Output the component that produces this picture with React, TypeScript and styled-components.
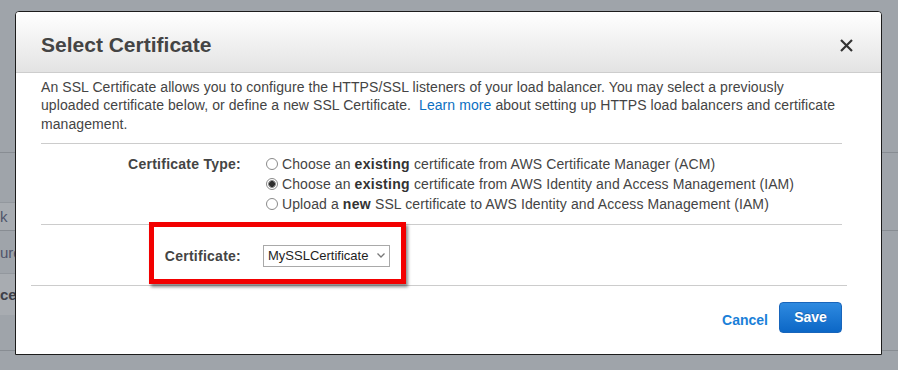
import React from "react";
import styled, { createGlobalStyle } from "styled-components";

const GlobalStyle = createGlobalStyle`
  html, body {
    margin: 0;
    padding: 0;
  }
  body {
    background: #9fa4aa;
    font-family: "Liberation Sans", Arial, sans-serif;
  }
`;

const Screen = styled.div`
  position: relative;
  width: 898px;
  height: 370px;
  overflow: hidden;
`;

/* page behind the dialog */
const BgPage = styled.div`
  display: flex;
  flex-direction: column;
`;

const BgRow = styled.div<{ $h: number; $line?: boolean }>`
  box-sizing: border-box;
  height: ${(p) => p.$h}px;
  display: flex;
  border-bottom: ${(p) => (p.$line ? "1px solid #888d93" : "none")};
`;

const BgCell = styled.div<{ $shade?: boolean; $bold?: boolean }>`
  box-sizing: border-box;
  width: 120px;
  display: flex;
  align-items: center;
  font-size: 15px;
  font-weight: ${(p) => (p.$bold ? "bold" : "normal")};
  color: ${(p) => (p.$bold ? "#3d4049" : "#4f546a")};
  background: ${(p) => (p.$shade ? "#a8acb1" : "transparent")};
  border-top: ${(p) => (p.$shade ? "1px solid #93989e" : "none")};
`;

/* dialog */
const Modal = styled.div`
  position: absolute;
  left: 15px;
  top: 11px;
  width: 867px;
  height: 344px;
  box-sizing: border-box;
  border: 1px solid #1c1c1c;
  border-radius: 4px 4px 0 0;
  background: #fff;
  display: flex;
  flex-direction: column;
`;

const Header = styled.div`
  box-sizing: border-box;
  height: 61px;
  padding: 6px 28px 0 25px;
  display: flex;
  align-items: center;
  justify-content: space-between;
  border-bottom: 1px solid #cdcdcd;
  border-radius: 3px 3px 0 0;
  background: linear-gradient(#ffffff, #e3e3e3);
`;

const Title = styled.h2`
  margin: 0;
  font-size: 21px;
  font-weight: bold;
  color: #444;
`;

const CloseButton = styled.button`
  width: 13px;
  height: 13px;
  padding: 0;
  border: none;
  background: transparent;
  display: flex;
  cursor: pointer;
`;

const Body = styled.div`
  position: relative;
  padding: 5px 39px 0 25px;
`;

const Intro = styled.p`
  margin: 0 0 10px;
  font-size: 14px;
  line-height: 18.3px;
  letter-spacing: 0.08px;
  color: #444;
`;

const Link = styled.a`
  color: #0b6fc2;
  text-decoration: none;
`;

const Section = styled.div<{ $pad: string }>`
  position: relative;
  padding: ${(p) => p.$pad};
  border-top: 1px solid #cccccc;
`;

const FormRow = styled.div<{ $align: string }>`
  display: grid;
  grid-template-columns: 200px 1fr;
  column-gap: 22px;
  align-items: ${(p) => p.$align};
`;

const Label = styled.div`
  text-align: right;
  font-size: 14px;
  line-height: 20px;
  font-weight: bold;
  letter-spacing: 0.25px;
  color: #444;
`;

const RadioList = styled.div`
  display: flex;
  flex-direction: column;
`;

const RadioOption = styled.label`
  display: flex;
  align-items: center;
  gap: 4px;
  height: 20px;
  font-size: 14px;
  letter-spacing: 0.1px;
  color: #444;
  white-space: nowrap;

  b {
    color: #333;
    letter-spacing: 0.3px;
  }
`;

const Radio = styled.input`
  appearance: none;
  margin: 1px 0 0 3px;
  width: 12px;
  height: 12px;
  box-sizing: border-box;
  border: 1px solid #8a8a8a;
  border-radius: 50%;
  background: #fff;

  &:checked {
    background: radial-gradient(circle, #2e2e2e 0 2.6px, #8f8f8f 3.1px 3.6px, #fff 4.2px);
  }
`;

const SelectWrap = styled.div`
  position: relative;
  width: 127px;
  height: 22px;
`;

const Select = styled.select`
  appearance: none;
  width: 100%;
  height: 100%;
  box-sizing: border-box;
  margin: 0;
  padding: 0 16px 0 4px;
  border: 1px solid #a9a9a9;
  border-radius: 0;
  background: #fff;
  font-family: "Liberation Sans", Arial, sans-serif;
  font-size: 13px;
  color: #1e1e1e;
`;

const Chevron = styled.svg`
  position: absolute;
  right: 5px;
  top: 8px;
  pointer-events: none;
`;

const Highlight = styled.div`
  position: absolute;
  left: 108px;
  top: -3px;
  width: 257px;
  height: 62px;
  box-sizing: border-box;
  border: 5px solid #f20000;
  box-shadow: 2px 3px 3px rgba(0, 0, 0, 0.45);
  pointer-events: none;
  z-index: 2;
`;

const Footer = styled.div`
  margin: 0 34px 0 15px;
  padding: 16px 5px 0 0;
  border-top: 1px solid #cccccc;
  display: flex;
  justify-content: flex-end;
  align-items: center;
  gap: 11px;
`;

const CancelButton = styled.button`
  padding: 6px 0 0;
  border: none;
  background: none;
  font-family: inherit;
  font-size: 14px;
  font-weight: bold;
  color: #1a80d8;
  cursor: pointer;
`;

const SaveButton = styled.button`
  width: 63px;
  height: 31px;
  box-sizing: border-box;
  border: 1px solid #1865bb;
  border-radius: 4px;
  background: linear-gradient(#2e8ae0, #0c67c6);
  font-family: inherit;
  font-size: 14px;
  font-weight: bold;
  color: #fff;
  text-shadow: 0 -1px 0 rgba(0, 0, 0, 0.2);
  cursor: pointer;
`;

const options = [
  { pre: "Choose an ", strong: "existing", post: " certificate from AWS Certificate Manager (ACM)" },
  { pre: "Choose an ", strong: "existing", post: " certificate from AWS Identity and Access Management (IAM)" },
  { pre: "Upload a ", strong: "new", post: " SSL certificate to AWS Identity and Access Management (IAM)" },
];

export default function App() {
  const [choice, setChoice] = React.useState(1);

  return (
    <Screen>
      <GlobalStyle />
      <BgPage>
        <BgRow $h={153} $line />
        <BgRow $h={49} />
        <BgRow $h={29} $line>
          <BgCell $shade>k</BgCell>
        </BgRow>
        <BgRow $h={42}>
          <BgCell>ure</BgCell>
        </BgRow>
        <BgRow $h={42}>
          <BgCell $shade $bold>ce</BgCell>
        </BgRow>
        <BgRow $h={36} $line />
      </BgPage>

      <Modal>
        <Header>
          <Title>Select Certificate</Title>
          <CloseButton aria-label="Close">
            <svg width="13" height="13" viewBox="0 0 13 13">
              <path d="M1 1L12 12M12 1L1 12" stroke="#333" strokeWidth="2.2" />
            </svg>
          </CloseButton>
        </Header>

        <Body>
          <Intro>
            An SSL Certificate allows you to configure the HTTPS/SSL listeners of your load balancer. You may
            select a previously uploaded certificate below, or define a new SSL Certificate.{"\u00a0 "}
            <Link href="#">Learn more</Link> about setting up HTTPS load balancers and certificate management.
          </Intro>

          <Section $pad="10px 0">
            <FormRow $align="start">
              <Label>Certificate Type:</Label>
              <RadioList>
                {options.map((o, i) => (
                  <RadioOption key={i}>
                    <Radio
                      type="radio"
                      name="certType"
                      checked={choice === i}
                      onChange={() => setChoice(i)}
                    />
                    <span>
                      {o.pre}
                      <b>{o.strong}</b>
                      {o.post}
                    </span>
                  </RadioOption>
                ))}
              </RadioList>
            </FormRow>
          </Section>

          <Section $pad="20px 0 18px">
            <Highlight />
            <FormRow $align="center">
              <Label>Certificate:</Label>
              <SelectWrap>
                <Select defaultValue="MySSLCertificate">
                  <option>MySSLCertificate</option>
                </Select>
                <Chevron width="8" height="5" viewBox="0 0 8 5">
                  <path d="M0.5 0.5L4 4L7.5 0.5" fill="none" stroke="#777" strokeWidth="1.3" />
                </Chevron>
              </SelectWrap>
            </FormRow>
          </Section>
        </Body>

        <Footer>
          <CancelButton>Cancel</CancelButton>
          <SaveButton>Save</SaveButton>
        </Footer>
      </Modal>
    </Screen>
  );
}
